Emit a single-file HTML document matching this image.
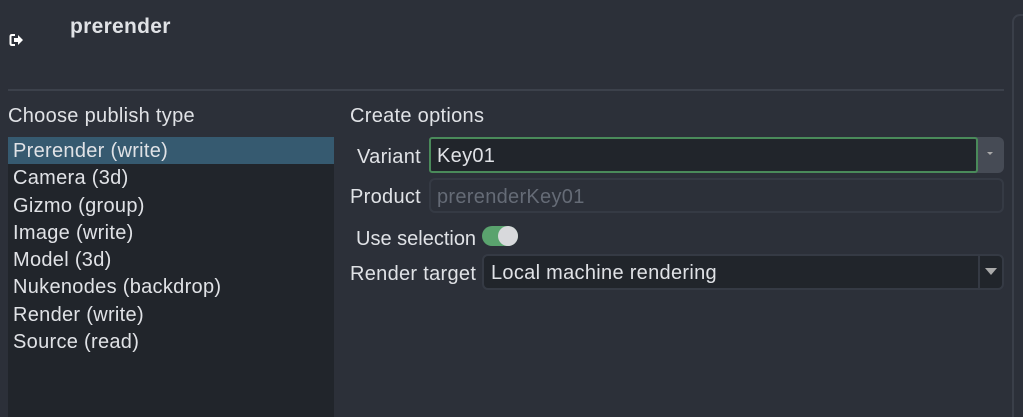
<!DOCTYPE html>
<html><head><style>
*{margin:0;padding:0;box-sizing:border-box}
html,body{width:1023px;height:417px;overflow:hidden}
body{background:#2c3039;color:#e0e2e6;font-family:"Liberation Sans",sans-serif;font-size:20px;letter-spacing:0.3px;position:relative}
.a{position:absolute}
.list div{height:27.3px;line-height:29px;padding-left:5px;white-space:nowrap}
</style></head><body>
<svg class="a" style="left:9px;top:33px" width="16" height="14" viewBox="0 0 16 14"><path d="M6 2H3Q1.5 2 1.5 3.5v7Q1.5 12 3 12h3" stroke="#fff" stroke-width="2" fill="none"/><path d="M5 5h4V2l5 5-5 5V9H5z" fill="#fff"/></svg>
<div class="a" style="left:70px;top:15px;font-weight:bold;font-size:21px">prerender</div>
<div class="a" style="left:1012px;top:14px;width:20px;height:420px;border-left:2px solid #3a3f49;border-top:2px solid #3a3f49;border-radius:8px 0 0 0"></div>
<div class="a" style="left:8px;top:89px;width:996px;height:2px;background:#3c414b"></div>
<div class="a" style="left:8px;top:105px">Choose publish type</div>
<div class="a list" style="left:8px;top:137px;width:326px;height:280px;background:#21252b">
<div style="background:#365a70">Prerender (write)</div>
<div>Camera (3d)</div><div>Gizmo (group)</div><div>Image (write)</div><div>Model (3d)</div><div>Nukenodes (backdrop)</div><div>Render (write)</div><div>Source (read)</div>
</div>
<div class="a" style="left:350px;top:105px">Create options</div>
<div class="a" style="left:357px;top:146px">Variant</div>
<div class="a" style="left:429px;top:137px;width:575px;height:36px;background:#464b55;border-radius:6px"></div>
<div class="a" style="left:429px;top:137px;width:549px;height:36px;background:#21252b;border:2px solid #4a8a5a;border-radius:3px;padding-left:6px;line-height:35px">Key01</div>
<div class="a" style="left:987px;top:152px;border:3px solid transparent;border-top:3px solid #aaa"></div>
<div class="a" style="left:350px;top:186px">Product</div>
<div class="a" style="left:429px;top:178px;width:575px;height:35px;border:2px solid #353a44;border-radius:6px;padding-left:6px;line-height:34px;color:#656b76">prerenderKey01</div>
<div class="a" style="left:356px;top:228px;letter-spacing:0">Use selection</div>
<div class="a" style="left:482px;top:226px;width:36px;height:20px;background:#5aa36e;border-radius:10px"></div>
<div class="a" style="left:498px;top:226px;width:20px;height:20px;background:#d8d9dc;border-radius:50%"></div>
<div class="a" style="left:350px;top:263px">Render target</div>
<div class="a" style="left:482px;top:254px;width:522px;height:36px;background:#21252b;border:2px solid #353a44;border-radius:6px;padding-left:7px;line-height:35px">Local machine rendering</div>
<div class="a" style="left:978px;top:256px;width:2px;height:32px;background:#353a44"></div>
<div class="a" style="left:985px;top:268px;border:6px solid transparent;border-top:7px solid #aaa"></div>
</body></html>
